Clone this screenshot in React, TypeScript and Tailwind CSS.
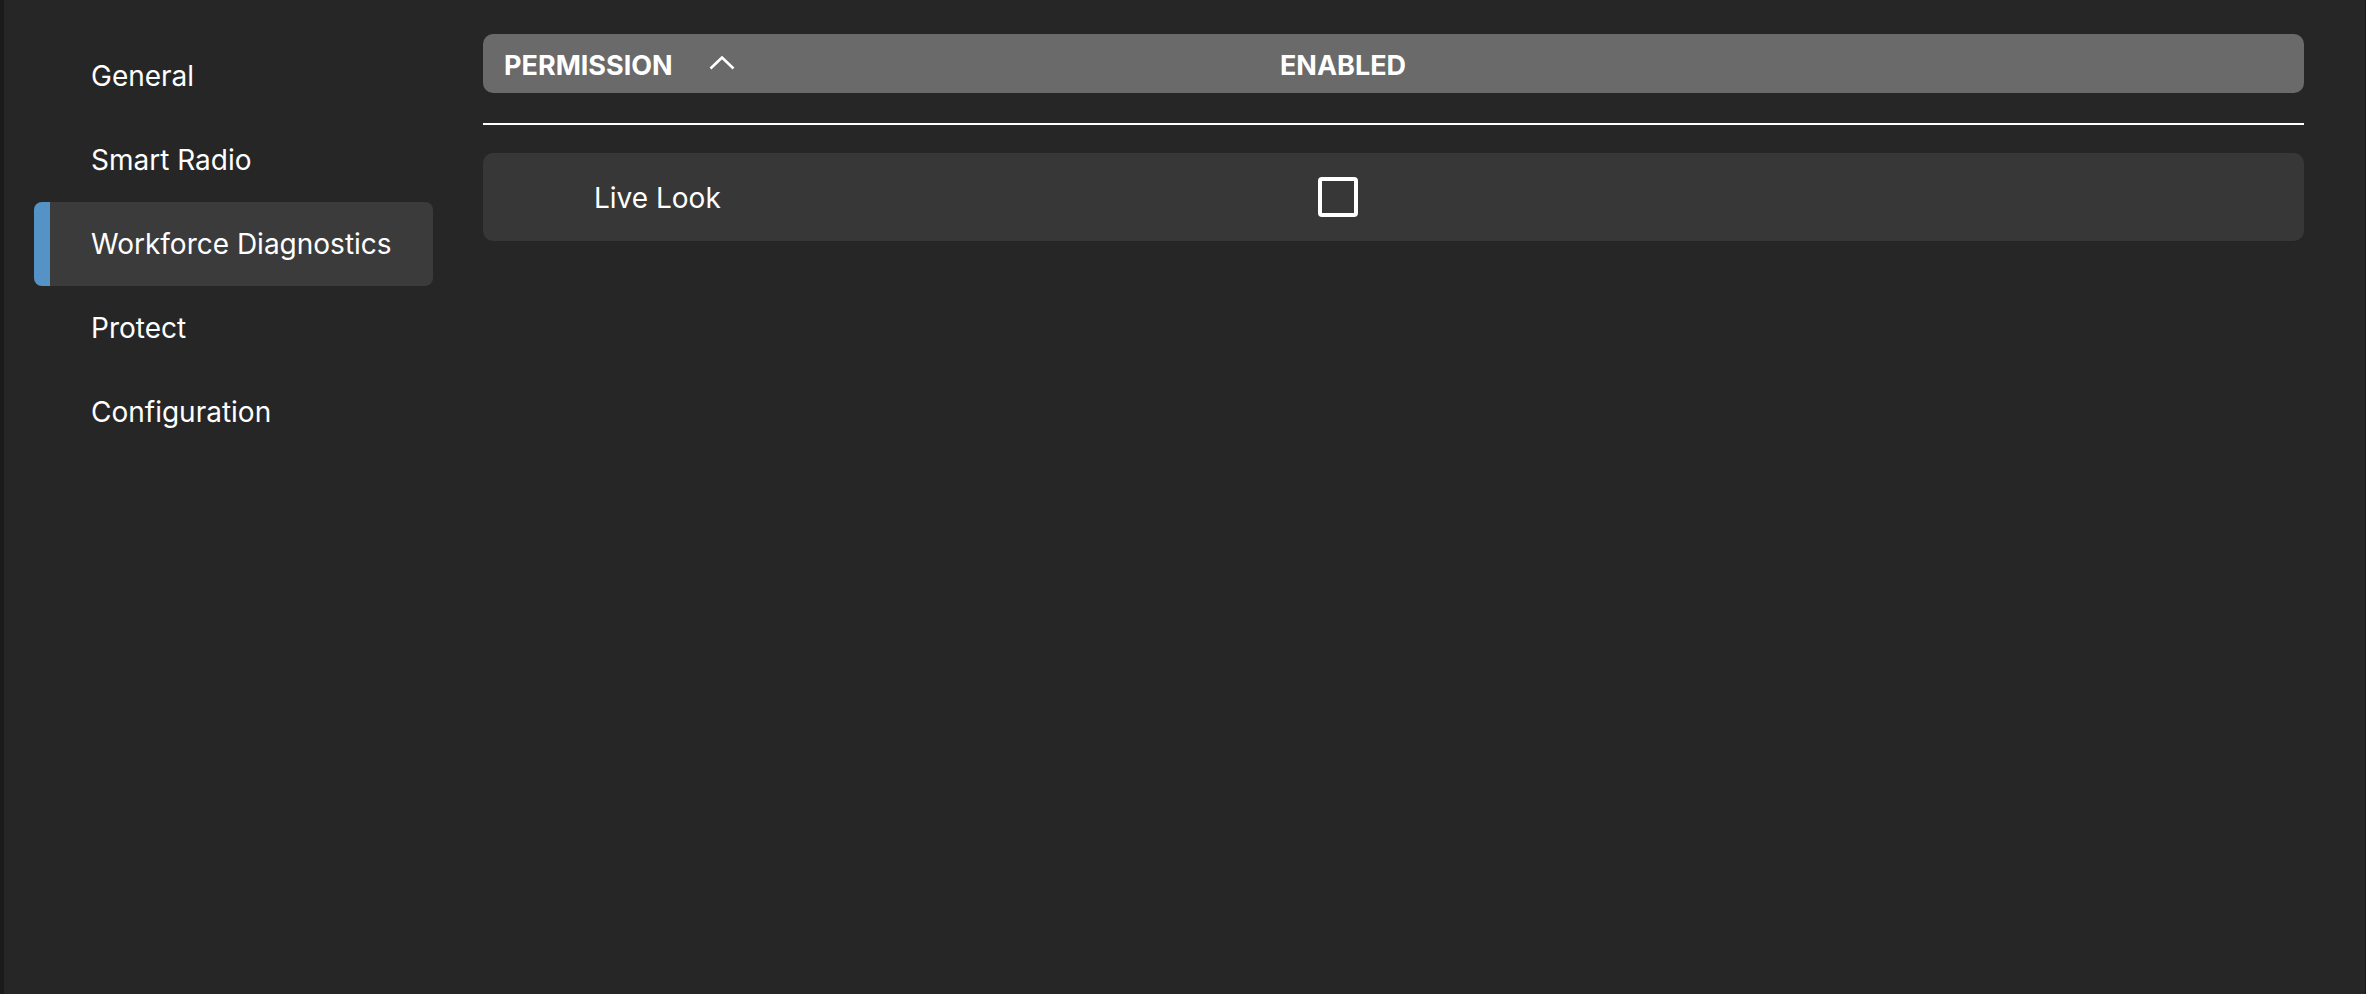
import { useState } from 'react';

const navItems = ['General', 'Smart Radio', 'Workforce Diagnostics', 'Protect', 'Configuration'];

const font = { fontFamily: 'Inter, "Noto Sans", sans-serif' };

function Sidebar() {
  const active = 'Workforce Diagnostics';
  return (
    <div className="w-[429px] shrink-0 pl-[30px] pt-[34px]">
      {navItems.map((label) => {
        const isActive = label === active;
        return (
          <div
            key={label}
            className={`relative flex h-[84px] items-center rounded-[8px] pl-[57px] text-[28px] text-white ${
              isActive ? 'bg-[#3b3b3b]' : ''
            }`}
          >
            {isActive && (
              <div className="absolute inset-y-0 left-0 w-[16px] rounded-l-[8px] bg-[#5592c5]" />
            )}
            <span className="leading-none">{label}</span>
          </div>
        );
      })}
    </div>
  );
}

function Checkbox() {
  const [checked, setChecked] = useState(false);
  return (
    <button
      onClick={() => setChecked(!checked)}
      className="flex h-[40px] w-[40px] items-center justify-center rounded-[4px] border-[4px] border-white"
    >
      {checked && (
        <svg viewBox="0 0 24 24" width="26" height="26" fill="none" stroke="white" strokeWidth="3">
          <path d="M4 12l5 5L20 6" />
        </svg>
      )}
    </button>
  );
}

function PermissionTable() {
  return (
    <div className="flex-1 pt-[34px] pr-[61px]">
      {/* header */}
      <div className="flex h-[59px] items-center rounded-[10px] bg-[#6a6a6a] pt-[3px] text-[27px] font-bold text-white">
        <div className="flex w-[660px] items-center pl-[21px]">
          <span className="leading-none">PERMISSION</span>
          <svg viewBox="0 0 26 14" width="26" height="14" fill="none" stroke="white" strokeWidth="2.6" className="ml-[36px] -mt-[4px]">
            <polyline points="1.5,12.5 13,1.5 24.5,12.5" />
          </svg>
        </div>
        <div className="w-[400px] text-center leading-none">ENABLED</div>
      </div>

      {/* divider */}
      <div className="mt-[30px] h-[2px] bg-white" />

      {/* rows */}
      <div className="mt-[28px] flex h-[88px] items-center rounded-[10px] bg-[#373737] text-[28px] text-white">
        <div className="w-[660px] pl-[111px] pt-[2px] leading-none">Live Look</div>
        <div className="flex w-[390px] justify-center">
          <Checkbox />
        </div>
      </div>
    </div>
  );
}

export default function App() {
  return (
    <div className="flex h-[994px] w-full bg-[#262626]" style={font}>
      <div className="w-[4px] shrink-0 bg-[#1b1b1b]" />
      <Sidebar />
      <div className="w-[50px] shrink-0" />
      <PermissionTable />
      <div className="w-[1px] shrink-0 bg-[#1b1b1b]" />
    </div>
  );
}
